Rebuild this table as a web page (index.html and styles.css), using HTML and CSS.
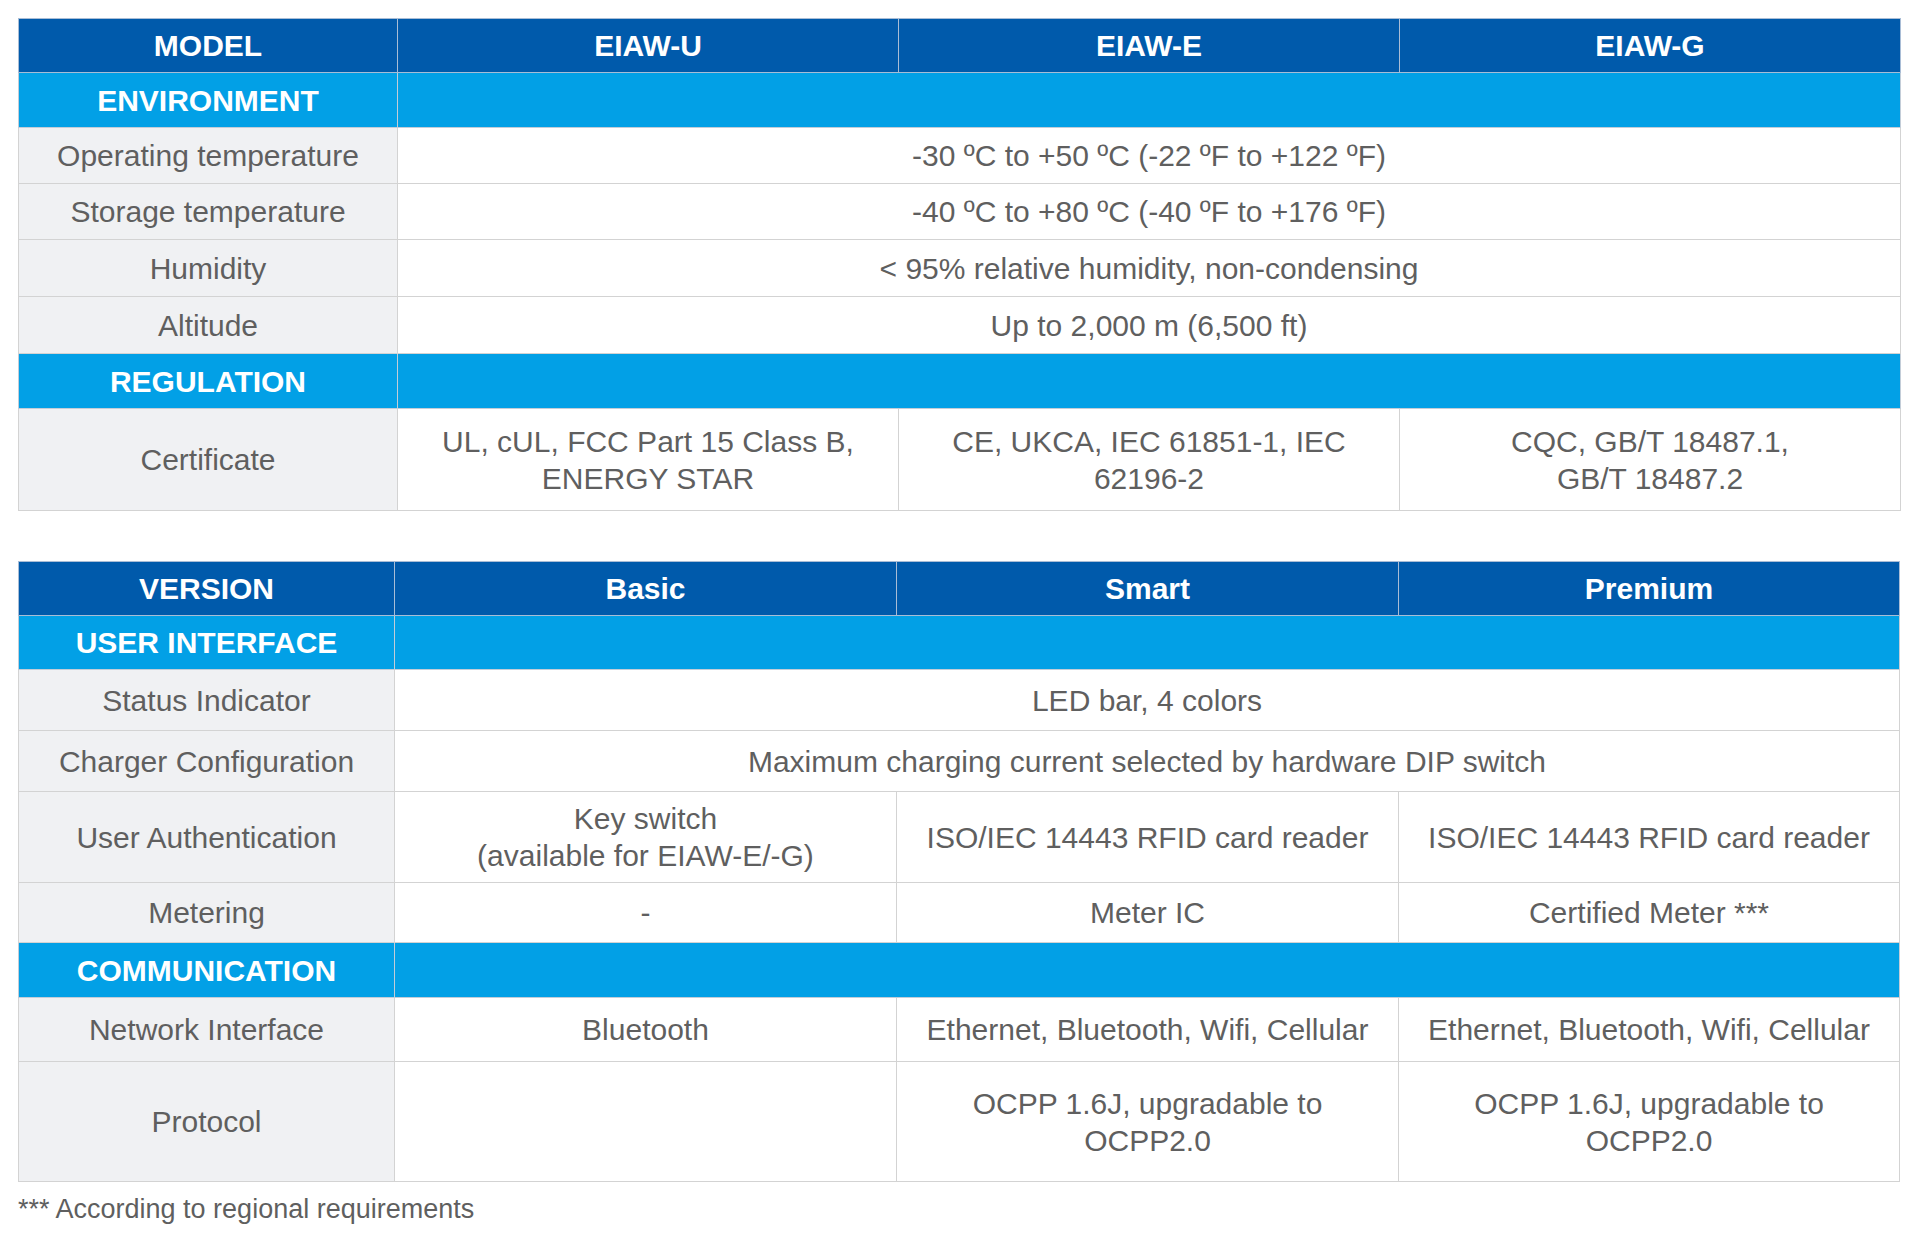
FILE: index.html
```html
<!DOCTYPE html>
<html lang="en">
<head>
<meta charset="utf-8">
<title>EIAW specifications</title>
<link rel="stylesheet" href="styles.css">
</head>
<body>
<div class="page">
  <table class="spec spec-model">
    <colgroup>
      <col class="c-label-a"><col class="c-val"><col class="c-val"><col class="c-val">
    </colgroup>
    <tr class="head h54">
      <th>MODEL</th><th>EIAW-U</th><th>EIAW-E</th><th>EIAW-G</th>
    </tr>
    <tr class="section h55">
      <th>ENVIRONMENT</th><td colspan="3"></td>
    </tr>
    <tr class="h56">
      <th class="label">Operating temperature</th>
      <td colspan="3">-30 ºC to +50 ºC (-22 ºF to +122 ºF)</td>
    </tr>
    <tr class="h56">
      <th class="label">Storage temperature</th>
      <td colspan="3">-40 ºC to +80 ºC (-40 ºF to +176 ºF)</td>
    </tr>
    <tr class="h57">
      <th class="label">Humidity</th>
      <td colspan="3">&lt; 95% relative humidity, non-condensing</td>
    </tr>
    <tr class="h57">
      <th class="label">Altitude</th>
      <td colspan="3">Up to 2,000 m (6,500 ft)</td>
    </tr>
    <tr class="section h55">
      <th>REGULATION</th><td colspan="3"></td>
    </tr>
    <tr class="h102">
      <th class="label">Certificate</th>
      <td>UL, cUL, FCC Part 15 Class B,<br>ENERGY STAR</td>
      <td>CE, UKCA, IEC 61851-1, IEC<br>62196-2</td>
      <td>CQC, GB/T 18487.1,<br>GB/T 18487.2</td>
    </tr>
  </table>

  <table class="spec spec-version">
    <colgroup>
      <col class="c-label-b"><col class="c-val2"><col class="c-val2"><col class="c-val">
    </colgroup>
    <tr class="head h54">
      <th>VERSION</th><th>Basic</th><th>Smart</th><th>Premium</th>
    </tr>
    <tr class="section h54">
      <th>USER INTERFACE</th><td colspan="3"></td>
    </tr>
    <tr class="h61">
      <th class="label">Status Indicator</th>
      <td colspan="3">LED bar, 4 colors</td>
    </tr>
    <tr class="h61">
      <th class="label">Charger Configuration</th>
      <td colspan="3">Maximum charging current selected by hardware DIP switch</td>
    </tr>
    <tr class="h91">
      <th class="label">User Authentication</th>
      <td>Key switch<br>(available for EIAW-E/-G)</td>
      <td>ISO/IEC 14443 RFID card reader</td>
      <td>ISO/IEC 14443 RFID card reader</td>
    </tr>
    <tr class="h60">
      <th class="label">Metering</th>
      <td>-</td>
      <td>Meter IC</td>
      <td>Certified Meter ***</td>
    </tr>
    <tr class="section h55">
      <th>COMMUNICATION</th><td colspan="3"></td>
    </tr>
    <tr class="h64">
      <th class="label">Network Interface</th>
      <td>Bluetooth</td>
      <td>Ethernet, Bluetooth, Wifi, Cellular</td>
      <td>Ethernet, Bluetooth, Wifi, Cellular</td>
    </tr>
    <tr class="h120">
      <th class="label">Protocol</th>
      <td></td>
      <td>OCPP 1.6J, upgradable to<br>OCPP2.0</td>
      <td>OCPP 1.6J, upgradable to<br>OCPP2.0</td>
    </tr>
  </table>

  <p class="footnote">*** According to regional requirements</p>
</div>
</body>
</html>
```

FILE: styles.css
```css
html, body {
  margin: 0;
  padding: 0;
  background: #ffffff;
}

body {
  font-family: "Liberation Sans", Arial, sans-serif;
  color: #5f5f5f;
}

.page {
  padding: 18px 0 0 18px;
  display: flex;
  flex-direction: column;
  align-items: flex-start;
}

.spec {
  border-collapse: collapse;
  table-layout: fixed;
  border: 1px solid #d3d3d3;
}

.spec-model {
  width: 1881px;
}

.spec-version {
  width: 1880px;
  margin-top: 50px;
}

.c-label-a { width: 379px; }
.c-label-b { width: 376px; }
.c-val { width: 501px; }
.c-val2 { width: 502px; }

.spec th,
.spec td {
  border: 1px solid #d3d3d3;
  padding: 0 10px;
  font-size: 30px;
  line-height: 37px;
  text-align: center;
  vertical-align: middle;
  white-space: nowrap;
  font-weight: normal;
}

.spec .head th {
  background: #005aab;
  color: #ffffff;
  font-weight: bold;
  border-color: #a9bdd6;
}

.spec .section th,
.spec .section td {
  background: #02a0e6;
  color: #ffffff;
  font-weight: bold;
  border-color: #c3cdd8;
}

.spec .label {
  background: #f0f1f3;
  color: #5f5f5f;
}

.h54 { height: 54px; }
.h55 { height: 55px; }
.h56 { height: 56px; }
.h57 { height: 57px; }
.h60 { height: 60px; }
.h61 { height: 61px; }
.h64 { height: 64px; }
.h91 { height: 91px; }
.h102 { height: 102px; }
.h120 { height: 120px; }

.footnote {
  margin: 12px 0 0 0;
  font-size: 27px;
  line-height: 31px;
  color: #5f5f5f;
}
```
